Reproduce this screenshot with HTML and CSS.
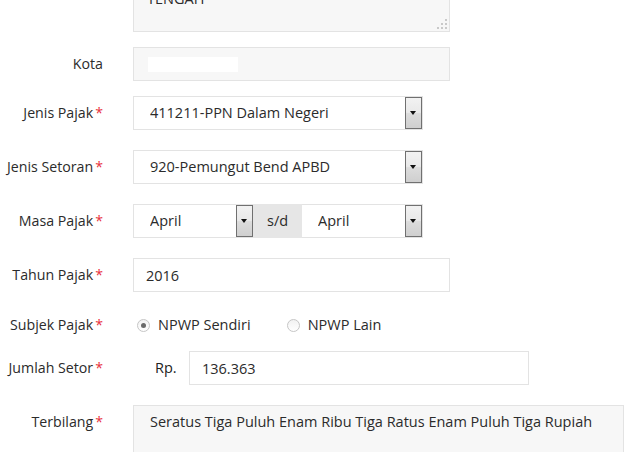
FILE: index.html
```html
<!DOCTYPE html>
<html lang="id">

<head>
    <meta charset="UTF-8">
    <meta name="viewport" content="width=device-width, initial-scale=1.0">
    <title>Form Setoran Pajak</title>
    <link rel="stylesheet" href="styles.css">
</head>

<body>

    <div class="form">

        <!-- alamat (read only) -->
        <div class="form-row row-address">
            <label class="form-label"></label>
            <div class="field field-readonly field-area">
                PROVINSI JAWA<br>TENGAH
                <svg class="grip" width="12" height="12" viewBox="0 0 12 12">
                    <rect x="9" y="1" width="2" height="2" />
                    <rect x="5" y="5" width="2" height="2" />
                    <rect x="9" y="5" width="2" height="2" />
                    <rect x="1" y="9" width="2" height="2" />
                    <rect x="5" y="9" width="2" height="2" />
                    <rect x="9" y="9" width="2" height="2" />
                </svg>
            </div>
        </div>

        <div class="form-row row-tight">
            <label class="form-label">Kota</label>
            <div class="field field-readonly"><span class="blank"></span></div>
        </div>

        <div class="form-row">
            <label class="form-label">Jenis Pajak<span class="req">*</span></label>
            <div class="select-wrap select-wide">
                <select class="select">
                    <option>411211-PPN Dalam Negeri</option>
                </select>
                <span class="select-arrow"></span>
            </div>
        </div>

        <div class="form-row">
            <label class="form-label">Jenis Setoran<span class="req">*</span></label>
            <div class="select-wrap select-wide">
                <select class="select">
                    <option>920-Pemungut Bend APBD</option>
                </select>
                <span class="select-arrow"></span>
            </div>
        </div>

        <div class="form-row">
            <label class="form-label">Masa Pajak<span class="req">*</span></label>
            <div class="range">
                <div class="select-wrap select-from">
                    <select class="select">
                        <option>April</option>
                    </select>
                    <span class="select-arrow"></span>
                </div>
                <span class="range-sep">s/d</span>
                <div class="select-wrap select-to">
                    <select class="select">
                        <option>April</option>
                    </select>
                    <span class="select-arrow"></span>
                </div>
            </div>
        </div>

        <div class="form-row">
            <label class="form-label">Tahun Pajak<span class="req">*</span></label>
            <input class="field" type="text" value="2016">
        </div>

        <div class="form-row row-radio">
            <label class="form-label">Subjek Pajak<span class="req">*</span></label>
            <div class="radio-group">
                <span class="radio">
                    <span class="radio-dot checked"></span>NPWP Sendiri
                </span>
                <span class="radio">
                    <span class="radio-dot"></span>NPWP Lain
                </span>
            </div>
        </div>

        <div class="form-row">
            <label class="form-label">Jumlah Setor<span class="req">*</span></label>
            <span class="prefix">Rp.</span>
            <input class="field field-amount" type="text" value="136.363">
        </div>

        <div class="form-row row-top-align">
            <label class="form-label">Terbilang<span class="req">*</span></label>
            <div class="field field-readonly field-words">Seratus Tiga Puluh Enam Ribu Tiga Ratus Enam Puluh Tiga Rupiah</div>
        </div>

    </div>

</body>

</html>
```

FILE: styles.css
```css
* {
    box-sizing: border-box;
    margin: 0;
    padding: 0;
}

body {
    font-family: "Open Sans", "Liberation Sans", Arial, sans-serif;
    font-size: 14.5px;
    line-height: 20px;
    color: #2b2b2b;
    background: #fff;
    overflow: hidden;
}

.form {
    display: flex;
    flex-direction: column;
    margin-top: -40px;
}

.form-row {
    display: flex;
    align-items: center;
    margin-bottom: 20px;
}

.row-address,
.row-tight {
    margin-bottom: 15px;
}

.row-radio {
    margin-top: -4px;
    margin-bottom: 9px;
}

.row-top-align {
    align-items: flex-start;
}

.form-label {
    width: 103px;
    margin-right: 30px;
    text-align: right;
    flex-shrink: 0;
    font-size: 14.2px;
}

.row-top-align .form-label {
    padding-top: 7px;
}

.req {
    color: #e8313b;
    margin-left: 2px;
}

/* input dasar */
.field {
    width: 317px;
    height: 34px;
    border: 1px solid #e3e3e3;
    background: #fff;
    font: inherit;
    color: inherit;
    padding: 0 12px;
    outline: none;
}

.field-readonly {
    background: #f7f7f7;
    display: flex;
    align-items: center;
    padding: 0 13px;
}

.field-area {
    height: 72px;
    display: block;
    padding-top: 8px;
    position: relative;
}

.grip {
    position: absolute;
    right: 1px;
    bottom: 1px;
    fill: #c9c9c9;
}

.blank {
    width: 90px;
    height: 15px;
    margin-left: 1px;
    background: #fff;
}

.field-amount {
    width: 340px;
}

.field-words {
    width: 491px;
    height: 70px;
    display: block;
    padding: 6px 16px;
}

/* select dengan tombol panah */
.select-wrap {
    position: relative;
    height: 34px;
}

.select-wide {
    width: 290px;
}

.select {
    appearance: none;
    -webkit-appearance: none;
    width: 100%;
    height: 34px;
    border: 1px solid #e3e3e3;
    background: #fff;
    font: inherit;
    color: inherit;
    padding: 0 16px;
    border-radius: 0;
    outline: none;
}

.select-arrow {
    position: absolute;
    top: 1px;
    right: 1px;
    bottom: 1px;
    width: 17px;
    border: 1px solid #707070;
    background: linear-gradient(#f2f2f2, #e9e9e9 48%, #dcdcdc 52%, #cfcfcf);
}

.select-arrow::after {
    content: "";
    position: absolute;
    left: 4px;
    top: 13px;
    border-left: 3.5px solid transparent;
    border-right: 3.5px solid transparent;
    border-top: 4px solid #111;
}

.range {
    display: flex;
    width: 290px;
}

.select-from {
    width: 120px;
}

.select-from .select {
    border-right: 0;
}

.select-from .select-arrow {
    right: 0;
}

.range-sep {
    width: 49px;
    height: 34px;
    background: #e6e6e6;
    display: flex;
    align-items: center;
    padding-left: 14px;
}

.select-to {
    width: 121px;
}

.select-to .select {
    border-left: 0;
}

/* radio */
.radio-group {
    display: flex;
    align-items: center;
    height: 34px;
    padding-left: 4px;
}

.radio {
    display: flex;
    align-items: center;
}

.radio + .radio {
    margin-left: 36px;
}

.radio-dot {
    width: 13px;
    height: 13px;
    border: 1px solid #c6c6c6;
    border-radius: 50%;
    background: linear-gradient(#f2f2f2, #fff);
    margin-right: 8px;
    display: flex;
    align-items: center;
    justify-content: center;
}

.radio-dot.checked::after {
    content: "";
    width: 5px;
    height: 5px;
    border-radius: 50%;
    background: #6a6a6a;
}

.prefix {
    width: 56px;
    padding-left: 22px;
    color: #222;
}
```
